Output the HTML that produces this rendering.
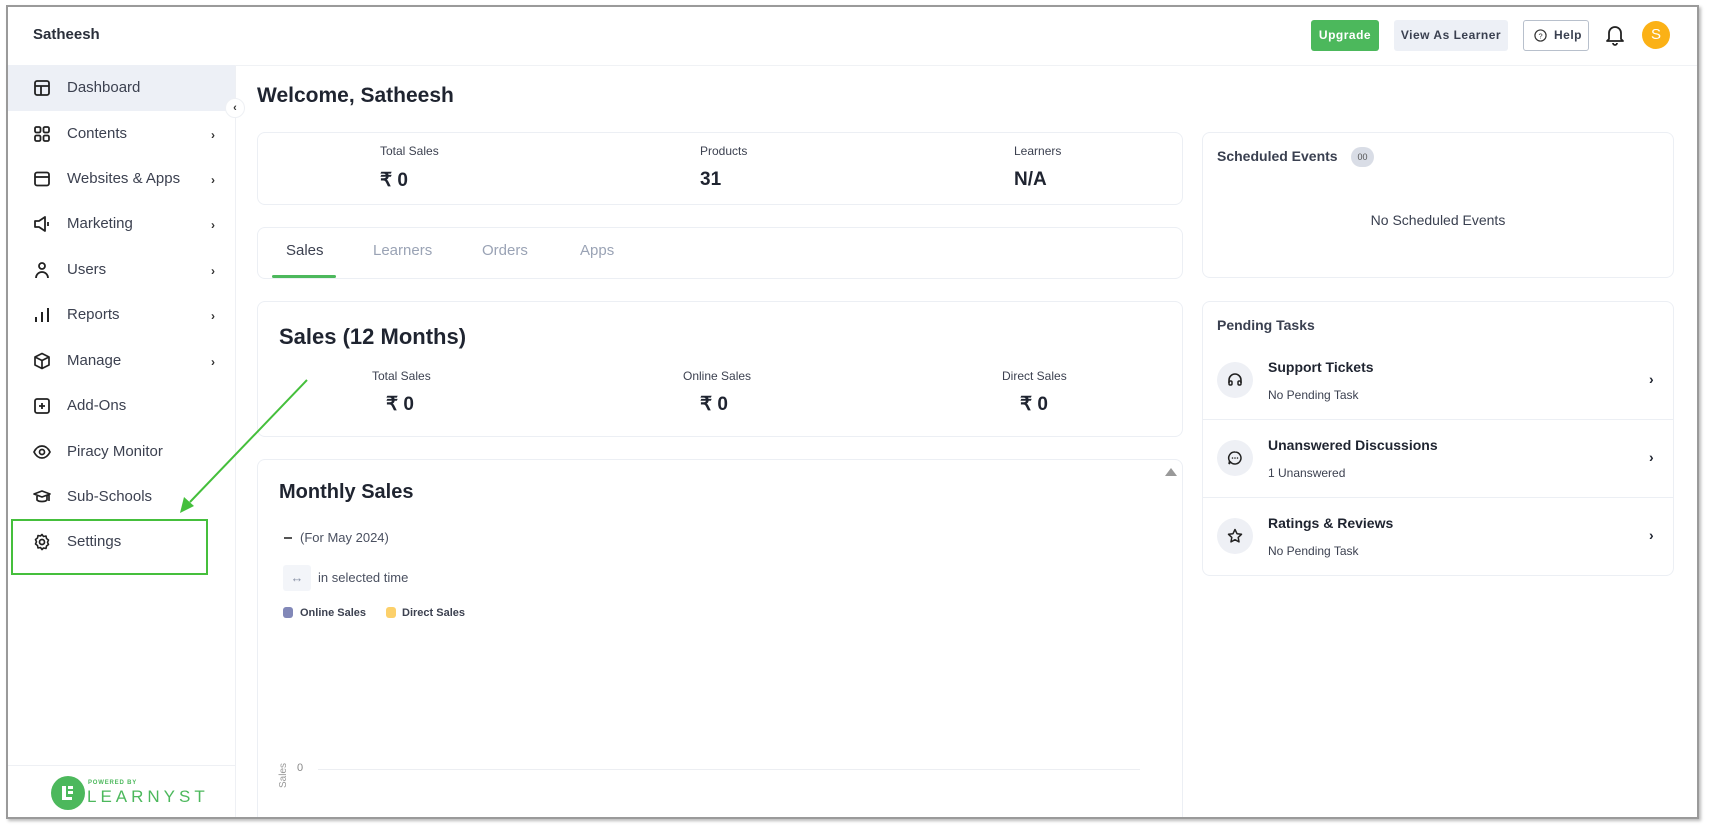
<!DOCTYPE html>
<html><head><meta charset="utf-8"><style>
*{box-sizing:border-box;margin:0;padding:0}
body{width:1720px;height:827px;background:#fff;font-family:"Liberation Sans",sans-serif;color:#1f2430;position:relative;overflow:hidden}
.a{position:absolute}
.frame{left:6px;top:5px;width:1693px;height:814px;border:2px solid #9a9a9a;box-shadow:2px 2px 3px #bbb;z-index:5}
.side{color:#3c4150;font-size:15px}
.it{position:absolute;left:67px}
.ic{position:absolute;left:33px;width:18px;height:18px}
.chev{position:absolute;left:211px;font-size:12px;font-weight:bold;color:#333}
.card{position:absolute;border:1px solid #eceff4;border-radius:8px;background:#fff}
.lbl{font-size:12px;color:#3c4150;position:absolute}
.val{font-size:19px;font-weight:bold;position:absolute;color:#1f2430}
.tab{position:absolute;top:242px;font-size:15px;color:#9aa3b5}
</style></head><body>
<div class="a frame"></div>
<div class="a" style="left:33px;top:26px;font-size:15px;font-weight:bold;color:#2a2f3a">Satheesh</div>
<div class="a" style="left:8px;top:65px;width:1690px;height:1px;background:#f0f2f5"></div>
<div class="a" style="left:1311px;top:20px;width:68px;height:31px;background:#4cb85c;border-radius:3px;color:#fff;font-size:12px;font-weight:bold;text-align:center;line-height:31px;letter-spacing:.5px">Upgrade</div>
<div class="a" style="left:1394px;top:20px;width:114px;height:31px;background:#edf0f6;border-radius:3px;color:#3a4050;font-size:12px;font-weight:bold;text-align:center;line-height:31px;letter-spacing:.5px">View As Learner</div>
<div class="a" style="left:1523px;top:20px;width:66px;height:31px;border:1px solid #b8c0cc;border-radius:3px;color:#3a4050;font-size:12px;font-weight:bold;line-height:29px;padding-left:30px;letter-spacing:.5px">Help</div>
<svg class="a" style="left:1534px;top:29px" width="13" height="13" viewBox="0 0 14 14"><circle cx="7" cy="7" r="6" fill="none" stroke="#333" stroke-width="1.3"/><text x="7" y="10" font-size="8" text-anchor="middle" fill="#333" font-family="Liberation Sans">?</text></svg>
<svg class="a" style="left:1605px;top:24px" width="20" height="22" viewBox="0 0 20 22"><path d="M4 15V9a6 6 0 0 1 12 0v6l2 2H2z" fill="none" stroke="#222" stroke-width="1.8" stroke-linejoin="round"/><path d="M8 19a2 2 0 0 0 4 0" fill="none" stroke="#222" stroke-width="1.8"/></svg>
<div class="a" style="left:1642px;top:21px;width:28px;height:28px;border-radius:50%;background:#fbb116;color:#fff;font-size:15px;text-align:center;line-height:28px">S</div>
<div class="a" style="left:8px;top:65px;width:227px;height:46px;background:#edf0f6"></div>
<div class="a" style="left:235px;top:66px;width:1px;height:751px;background:#eef0f4"></div>
<div class="a" style="left:225px;top:98px;width:20px;height:20px;border-radius:50%;background:#fff;border:1px solid #eef0f4;font-size:11px;text-align:center;line-height:18px;color:#333;font-weight:bold">‹</div>
<div class="side">
<svg class="ic" style="top:79px" viewBox="0 0 18 18"><rect x="2" y="2" width="14" height="14" rx="2" fill="none" stroke="#222" stroke-width="1.8"/><path d="M2 7h14M8 7v9" stroke="#222" stroke-width="1.8"/></svg><div class="it" style="top:79px">Dashboard</div>
<svg class="ic" style="top:125px" viewBox="0 0 18 18"><g fill="none" stroke="#222" stroke-width="1.8"><rect x="2" y="2" width="5.5" height="5.5" rx="1.5"/><rect x="10.5" y="2" width="5.5" height="5.5" rx="1.5"/><rect x="2" y="10.5" width="5.5" height="5.5" rx="1.5"/><rect x="10.5" y="10.5" width="5.5" height="5.5" rx="1.5"/></g></svg><div class="it" style="top:125px">Contents</div><div class="chev" style="top:128px">›</div>
<svg class="ic" style="top:170px" viewBox="0 0 18 18"><rect x="2" y="2.5" width="14" height="13" rx="2" fill="none" stroke="#222" stroke-width="1.8"/><path d="M2 7h14" stroke="#222" stroke-width="1.8"/></svg><div class="it" style="top:170px">Websites &amp; Apps</div><div class="chev" style="top:173px">›</div>
<svg class="ic" style="top:215px" viewBox="0 0 18 18"><path d="M2 6h4l6-4v14l-6-4H2z" fill="none" stroke="#222" stroke-width="1.8" stroke-linejoin="round"/><path d="M15 7v4" stroke="#222" stroke-width="1.8"/></svg><div class="it" style="top:215px">Marketing</div><div class="chev" style="top:218px">›</div>
<svg class="ic" style="top:261px" viewBox="0 0 18 18"><circle cx="9" cy="5" r="3" fill="none" stroke="#222" stroke-width="1.8"/><path d="M3 17a6 6 0 0 1 12 0" fill="none" stroke="#222" stroke-width="1.8"/></svg><div class="it" style="top:261px">Users</div><div class="chev" style="top:264px">›</div>
<svg class="ic" style="top:306px" viewBox="0 0 18 18"><path d="M3 16v-5M9 16V6M15 16V2" stroke="#222" stroke-width="2"/></svg><div class="it" style="top:306px">Reports</div><div class="chev" style="top:309px">›</div>
<svg class="ic" style="top:352px" viewBox="0 0 18 18"><path d="M9 1.5l7 3.5v8l-7 3.5-7-3.5V5z M2 5l7 3.5 7-3.5 M9 8.5v8" fill="none" stroke="#222" stroke-width="1.7" stroke-linejoin="round"/></svg><div class="it" style="top:352px">Manage</div><div class="chev" style="top:355px">›</div>
<svg class="ic" style="top:397px" viewBox="0 0 18 18"><rect x="2" y="2" width="14" height="14" rx="2" fill="none" stroke="#222" stroke-width="1.8"/><path d="M9 6v6M6 9h6" stroke="#222" stroke-width="1.8"/></svg><div class="it" style="top:397px">Add-Ons</div>
<svg class="ic" style="top:443px" viewBox="0 0 18 18"><path d="M1 9c2-4 5-6 8-6s6 2 8 6c-2 4-5 6-8 6s-6-2-8-6z" fill="none" stroke="#222" stroke-width="1.7"/><circle cx="9" cy="9" r="2.5" fill="none" stroke="#222" stroke-width="1.7"/></svg><div class="it" style="top:443px">Piracy Monitor</div>
<svg class="ic" style="top:488px" viewBox="0 0 18 18"><path d="M1 6l8-3 8 3-8 3z M4 8v4c2 2 8 2 10 0V8 M16 7v6" fill="none" stroke="#222" stroke-width="1.7" stroke-linejoin="round"/></svg><div class="it" style="top:488px">Sub-Schools</div>
<svg class="ic" style="top:533px" viewBox="0 0 18 18"><circle cx="9" cy="9" r="2.5" fill="none" stroke="#222" stroke-width="1.7"/><path d="M9 1.5l1.5 2 2.5-.5.5 2.5 2 1.5-1 2.3 1 2.2-2 1.5-.5 2.5-2.5-.5L9 16.5 7.5 14.5l-2.5.5-.5-2.5-2-1.5 1-2.2-1-2.3 2-1.5.5-2.5 2.5.5z" fill="none" stroke="#222" stroke-width="1.6" stroke-linejoin="round"/></svg><div class="it" style="top:533px">Settings</div>
</div>
<div class="a" style="left:11px;top:519px;width:197px;height:56px;border:2px solid #45bf3c"></div>
<div class="a" style="left:8px;top:765px;width:227px;height:1px;background:#eef0f4"></div>
<div class="a" style="left:51px;top:776px;width:34px;height:34px;border-radius:50%;background:#4cb85c"></div>
<div class="a" style="left:62px;top:786px;width:4px;height:14px;background:#fff"></div><div class="a" style="left:62px;top:797px;width:10px;height:3px;background:#fff"></div><div class="a" style="left:68px;top:786px;width:5px;height:3px;background:#fff"></div><div class="a" style="left:68px;top:791px;width:5px;height:3px;background:#fff"></div>
<div class="a" style="left:88px;top:780px;font-size:6px;font-weight:bold;color:#4cb85c;letter-spacing:.8px">POWERED BY</div>
<div class="a" style="left:87px;top:787px;font-size:17px;color:#4cb85c;letter-spacing:4px">LEARNYST</div>
<div class="a" style="left:257px;top:84px;font-size:21px;font-weight:bold">Welcome, Satheesh</div>
<div class="card" style="left:257px;top:132px;width:926px;height:73px"></div>
<div class="lbl" style="left:380px;top:144px">Total Sales</div><div class="val" style="left:380px;top:169px">₹ 0</div>
<div class="lbl" style="left:700px;top:144px">Products</div><div class="val" style="left:700px;top:169px">31</div>
<div class="lbl" style="left:1014px;top:144px">Learners</div><div class="val" style="left:1014px;top:169px">N/A</div>
<div class="card" style="left:257px;top:227px;width:926px;height:52px"></div>
<div class="tab" style="left:286px;color:#3c4150">Sales</div>
<div class="tab" style="left:373px">Learners</div>
<div class="tab" style="left:482px">Orders</div>
<div class="tab" style="left:580px">Apps</div>
<div class="a" style="left:272px;top:275px;width:64px;height:3px;background:#4cb85c;border-radius:2px"></div>
<div class="card" style="left:257px;top:301px;width:926px;height:136px"></div>
<div class="a" style="left:279px;top:324px;font-size:22px;font-weight:bold">Sales (12 Months)</div>
<div class="lbl" style="left:372px;top:369px">Total Sales</div><div class="val" style="left:386px;top:393px">₹ 0</div>
<div class="lbl" style="left:683px;top:369px">Online Sales</div><div class="val" style="left:700px;top:393px">₹ 0</div>
<div class="lbl" style="left:1002px;top:369px">Direct Sales</div><div class="val" style="left:1020px;top:393px">₹ 0</div>
<div class="card" style="left:257px;top:459px;width:926px;height:358px;border-bottom:none;border-radius:8px 8px 0 0"></div>
<div class="a" style="left:1165px;top:468px;width:0;height:0;border-left:6px solid transparent;border-right:6px solid transparent;border-bottom:8px solid #999"></div>
<div class="a" style="left:279px;top:481px;font-size:20px;font-weight:bold">Monthly Sales</div>
<div class="a" style="left:284px;top:537px;width:8px;height:2px;background:#555"></div>
<div class="a" style="left:300px;top:530px;font-size:13px;color:#4a5060">(For May 2024)</div>
<div class="a" style="left:283px;top:565px;width:28px;height:26px;background:#f3f5f9;border-radius:3px;color:#8a92a6;font-size:13px;text-align:center;line-height:26px">↔</div>
<div class="a" style="left:318px;top:570px;font-size:13px;color:#4a5060">in selected time</div>
<div class="a" style="left:283px;top:607px;width:10px;height:11px;background:#8288b8;border-radius:3px"></div>
<div class="a" style="left:300px;top:607px;font-size:11px;font-weight:bold;color:#3c4150">Online Sales</div>
<div class="a" style="left:386px;top:607px;width:10px;height:11px;background:#fcd06a;border-radius:3px"></div>
<div class="a" style="left:402px;top:607px;font-size:11px;font-weight:bold;color:#3c4150">Direct Sales</div>
<div class="a" style="left:278px;top:788px;font-size:10px;color:#999;transform:rotate(-90deg);transform-origin:left top">Sales</div>
<div class="a" style="left:297px;top:762px;font-size:11px;color:#888">0</div>
<div class="a" style="left:318px;top:769px;width:822px;height:1px;background:#eceef2"></div>
<div class="card" style="left:1202px;top:132px;width:472px;height:146px"></div>
<div class="a" style="left:1217px;top:148px;font-size:14px;font-weight:bold;color:#3a4050">Scheduled Events</div>
<div class="a" style="left:1351px;top:147px;width:23px;height:20px;border-radius:10px;background:#d9dde6;font-size:9px;text-align:center;line-height:20px;color:#555">00</div>
<div class="a" style="left:1202px;top:212px;width:472px;text-align:center;font-size:14px;color:#3a4050">No Scheduled Events</div>
<div class="card" style="left:1202px;top:301px;width:472px;height:275px"></div>
<div class="a" style="left:1217px;top:317px;font-size:14px;font-weight:bold;color:#3a4050">Pending Tasks</div>
<div class="a" style="left:1203px;top:419px;width:470px;height:1px;background:#eceff4"></div>
<div class="a" style="left:1203px;top:497px;width:470px;height:1px;background:#eceff4"></div>
<div class="a" style="left:1217px;top:362px;width:36px;height:36px;border-radius:50%;background:#eef0f5"></div>
<div class="a" style="left:1217px;top:440px;width:36px;height:36px;border-radius:50%;background:#eef0f5"></div>
<div class="a" style="left:1217px;top:518px;width:36px;height:36px;border-radius:50%;background:#eef0f5"></div>
<svg class="a" style="left:1227px;top:372px" width="16" height="16" viewBox="0 0 16 16"><path d="M2 11V8a6 6 0 0 1 12 0v3" fill="none" stroke="#222" stroke-width="1.6"/><rect x="2" y="9" width="3" height="4" rx="1.2" fill="none" stroke="#222" stroke-width="1.5"/><rect x="11" y="9" width="3" height="4" rx="1.2" fill="none" stroke="#222" stroke-width="1.5"/></svg>
<svg class="a" style="left:1227px;top:450px" width="16" height="16" viewBox="0 0 16 16"><path d="M8 2a6 6 0 1 1-4.5 10L2 14l.5-3A6 6 0 0 1 8 2z" fill="none" stroke="#222" stroke-width="1.5"/><circle cx="5.5" cy="8" r=".8" fill="#222"/><circle cx="8" cy="8" r=".8" fill="#222"/><circle cx="10.5" cy="8" r=".8" fill="#222"/></svg>
<svg class="a" style="left:1227px;top:528px" width="16" height="16" viewBox="0 0 16 16"><path d="M8 1.5l2 4.2 4.5.6-3.3 3.1.8 4.5L8 11.7 4 13.9l.8-4.5L1.5 6.3 6 5.7z" fill="none" stroke="#222" stroke-width="1.5" stroke-linejoin="round"/></svg>
<div class="a" style="left:1268px;top:359px;font-size:14px;font-weight:bold">Support Tickets</div>
<div class="a" style="left:1268px;top:388px;font-size:12px;color:#3c4150">No Pending Task</div>
<div class="a" style="left:1268px;top:437px;font-size:14px;font-weight:bold">Unanswered Discussions</div>
<div class="a" style="left:1268px;top:466px;font-size:12px;color:#3c4150">1 Unanswered</div>
<div class="a" style="left:1268px;top:515px;font-size:14px;font-weight:bold">Ratings &amp; Reviews</div>
<div class="a" style="left:1268px;top:544px;font-size:12px;color:#3c4150">No Pending Task</div>
<div class="a" style="left:1649px;top:371px;font-size:14px;font-weight:bold">›</div>
<div class="a" style="left:1649px;top:449px;font-size:14px;font-weight:bold">›</div>
<div class="a" style="left:1649px;top:527px;font-size:14px;font-weight:bold">›</div>
<svg class="a" style="left:0;top:0;z-index:10" width="400" height="600"><line x1="307" y1="380" x2="190" y2="502" stroke="#45bf3c" stroke-width="2"/><path d="M180 513l4-16 10 9z" fill="#45bf3c"/></svg>
</body></html>
